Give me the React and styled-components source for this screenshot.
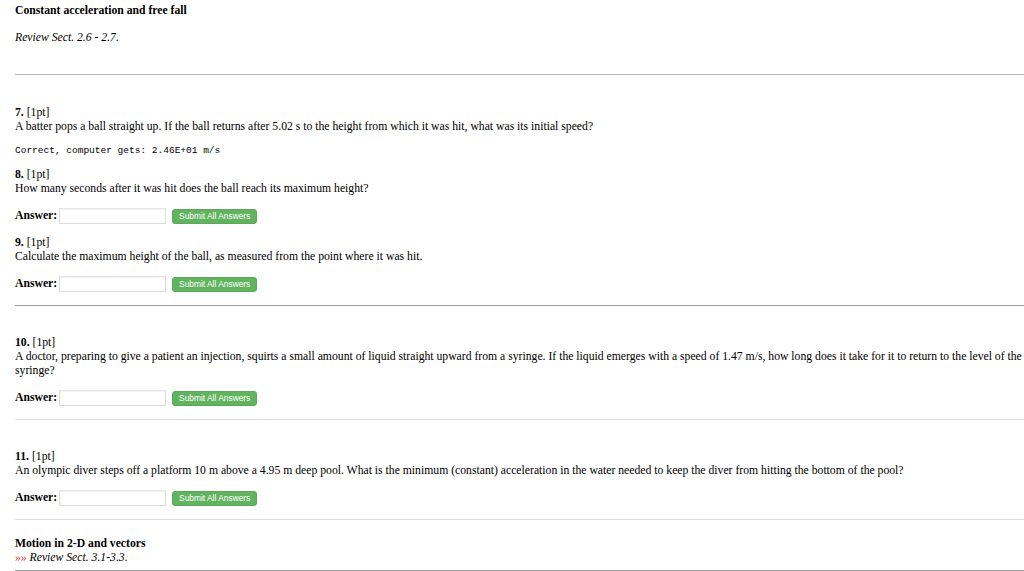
import styled, { createGlobalStyle } from 'styled-components';

const GlobalStyle = createGlobalStyle`
  html, body {
    margin: 0;
    padding: 0;
    background: #ffffff;
  }
  body {
    font-family: "Liberation Serif", "Times New Roman", serif;
    font-size: 11.7px;
    line-height: 14px;
    color: #000000;
  }
`;

const problems = [
  {
    num: 7,
    text: 'A batter pops a ball straight up. If the ball returns after 5.02 s to the height from which it was hit, what was its initial speed?',
    result: 'Correct, computer gets: 2.46E+01 m/s',
  },
  {
    num: 8,
    text: 'How many seconds after it was hit does the ball reach its maximum height?',
  },
  {
    num: 9,
    text: 'Calculate the maximum height of the ball, as measured from the point where it was hit.',
    ruleAfter: '#9a9a9a',
  },
  {
    num: 10,
    text: 'A doctor, preparing to give a patient an injection, squirts a small amount of liquid straight upward from a syringe. If the liquid emerges with a speed of 1.47 m/s, how long does it take for it to return to the level of the syringe?',
    spaced: true,
    ruleAfter: '#dcdcdc',
  },
  {
    num: 11,
    text: 'An olympic diver steps off a platform 10 m above a 4.95 m deep pool. What is the minimum (constant) acceleration in the water needed to keep the diver from hitting the bottom of the pool?',
    spaced: true,
    ruleAfter: '#dcdcdc',
  },
];

function AnswerRow() {
  return (
    <Row>
      <Label>Answer:</Label>
      <Input type="text" />
      <SubmitBtn type="button">Submit All Answers</SubmitBtn>
    </Row>
  );
}

function Problem({ data, first }) {
  return (
    <>
      <ProblemBox $top={first ? 31 : data.spaced ? 30 : 12}>
        <Number>{data.num}.</Number> [1pt]
        <Text>{data.text}</Text>
      </ProblemBox>
      {data.result ? <Result>{data.result}</Result> : <AnswerRow />}
      {data.ruleAfter && <Rule $color={data.ruleAfter} $top={13} />}
    </>
  );
}

export default function App() {
  return (
    <Page>
      <GlobalStyle />
      <Title>Constant acceleration and free fall</Title>
      <Review>Review Sect. 2.6 - 2.7.</Review>
      <Rule $color="#b4b4b4" $top={29} />
      {problems.map((p, i) => (
        <Problem key={p.num} data={p} first={i === 0} />
      ))}
      <NextTitle>Motion in 2-D and vectors</NextTitle>
      <NextReview>
        <Arrows>»»</Arrows> <em>Review Sect. 3.1-3.3.</em>
      </NextReview>
      <Rule $color="#9a9a9a" $top={5} />
    </Page>
  );
}

const Page = styled.div`
  padding: 4px 0 0 15px;
  width: 1009px;
`;

const Title = styled.div`
  font-weight: bold;
`;

const Review = styled.div`
  margin-top: 13px;
  font-style: italic;
`;

const Rule = styled.div`
  margin-top: ${(p) => p.$top}px;
  height: 0;
  border-top: 1px solid ${(p) => p.$color};
`;

const ProblemBox = styled.div`
  margin-top: ${(p) => p.$top}px;
`;

const Number = styled.b``;

const Text = styled.div`
  margin-right: -4px;
`;

const Result = styled.div`
  margin-top: 11px;
  margin-bottom: -1px;
  font-family: "Liberation Mono", "Courier New", monospace;
  font-size: 9.5px;
  line-height: 12px;
`;

const Row = styled.div`
  display: flex;
  align-items: center;
  margin-top: 12px;
  height: 16px;
`;

const Label = styled.b`
  margin-right: 2px;
`;

const Input = styled.input`
  box-sizing: border-box;
  width: 107px;
  height: 16px;
  margin: 0;
  padding: 0 3px;
  border: 1px solid #dcdcdc;
  border-top-color: #e6e6e6;
  box-shadow: inset 0 1px 1px rgba(0, 0, 0, 0.06);
  background: #fff;
`;

const SubmitBtn = styled.button`
  box-sizing: border-box;
  margin-left: 6px;
  width: 85px;
  height: 15px;
  padding: 0;
  border: 1px solid #5aa858;
  border-radius: 3px;
  background: #62b35f;
  color: #ffffff;
  font-family: "Liberation Sans", Arial, sans-serif;
  font-size: 8.4px;
  line-height: 13px;
  cursor: pointer;
`;

const NextTitle = styled.div`
  margin-top: 17px;
  font-weight: bold;
`;

const NextReview = styled.div`
  font-style: italic;
`;

const Arrows = styled.span`
  color: #e0322c;
  font-style: normal;
`;
